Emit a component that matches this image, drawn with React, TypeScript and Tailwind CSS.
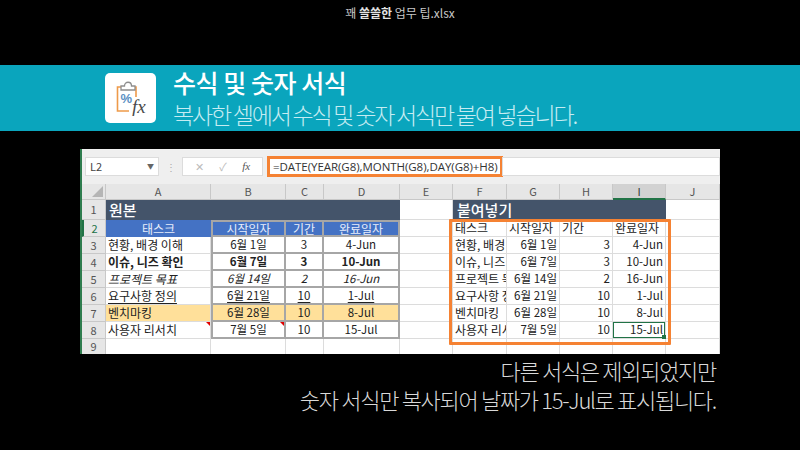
import React from "react";

const KR = "font-['Noto_Sans_CJK_KR','Noto_Sans',sans-serif]";

const colHeads = ["A", "B", "C", "D", "E", "F", "G", "H", "I", "J"];

type Row = { n: number; a: string; b: string; c: string; d: string; style: string; bg?: string };
const rows: Row[] = [
  { n: 3, a: "현황, 배경 이해", b: "6월 1일", c: "3", d: "4-Jun", style: "" },
  { n: 4, a: "이슈, 니즈 확인", b: "6월 7일", c: "3", d: "10-Jun", style: "font-bold" },
  { n: 5, a: "프로젝트 목표", b: "6월 14일", c: "2", d: "16-Jun", style: "italic" },
  { n: 6, a: "요구사항 정의", b: "6월 21일", c: "10", d: "1-Jul", style: "underline" },
  { n: 7, a: "벤치마킹", b: "6월 28일", c: "10", d: "8-Jul", style: "", bg: "bg-[#ffe09a]" },
  { n: 8, a: "사용자 리서치", b: "7월 5일", c: "10", d: "15-Jul", style: "" },
];

const grid = "border-r border-b border-[#dcdcdc]";
const head = "flex items-center justify-center bg-[#e6e6e6] border-r border-b border-[#c8c8c8] text-[11px] text-[#555]";

function App() {
  return (
    <div className={`w-[800px] h-[450px] bg-black flex flex-col overflow-hidden ${KR}`}>
      <div className="h-[65px] shrink-0 pt-[4px] text-center text-[12px] leading-[18px] text-[#c8c8c8] whitespace-nowrap">
        꽤 <span className="font-bold text-[#e4e4e4]">쓸쓸한</span> 업무 팁.xlsx
      </div>

      <div className="h-[66px] shrink-0 bg-[#0aa5bd] flex items-center pl-[105px]">
        <div className="w-[51px] h-[50px] rounded-[5px] bg-white flex items-center justify-center">
          <svg width="34" height="36" viewBox="0 0 34 36">
            <path d="M8 7H3.5v24H15" fill="none" stroke="#ee9a4a" strokeWidth="1.6" />
            <path d="M18 7h4v10" fill="none" stroke="#ee9a4a" strokeWidth="1.6" />
            <path d="M7 10V6h3.5c0-5 7-5 7 0H21v4z" fill="#fff" stroke="#8d8d8d" strokeWidth="1.3" />
            <text x="6.5" y="23" fontSize="13" fontWeight="700" fill="#5a8fc4" fontFamily="Liberation Sans">%</text>
            <text x="18" y="33" fontSize="19" fontStyle="italic" fill="#4a4a4a" fontFamily="Liberation Serif">fx</text>
          </svg>
        </div>
        <div className="ml-[17px] flex flex-col">
          <div className="text-[25px] leading-[32px] text-white font-medium tracking-[-0.45px] whitespace-nowrap">수식 및 숫자 서식</div>
          <div className="text-[23px] leading-[32px] text-[#c5ecf2] font-light tracking-[-2.2px] whitespace-nowrap">복사한 셀에서 수식 및 숫자 서식만 붙여 넣습니다.</div>
        </div>
      </div>

      <div className="ml-[80px] mt-[18px] w-[640px] h-[205px] shrink-0 bg-white flex flex-col border-l-2 border-[#2f7d4f] overflow-hidden">
        {/* Formula bar */}
        <div className="h-[35px] shrink-0 bg-[#efefef] flex items-center pl-[3px]">
          <div className="w-[74px] h-[19px] bg-white border border-[#dcdcdc] flex items-center justify-between px-[4px] text-[11px] text-[#444]">
            <span>L2</span>
            <span className="text-[7px] text-[#666]">▼</span>
          </div>
          <div className="w-[23px] text-center text-[10px] text-[#aaa]">⋮</div>
          <div className="w-[81px] h-[19px] bg-white border border-[#dcdcdc] flex items-center justify-around px-[4px] text-[11px] text-[#bbb]">
            <span>✕</span>
            <span>✓</span>
            <span className="font-['Liberation_Serif'] italic text-[#555]">fx</span>
          </div>
          <div className="ml-[4px] w-[236px] h-[21px] bg-white border-[3px] border-[#f58233] flex items-center pl-[3px] text-[11.5px] leading-none text-[#333] font-['Open_Sans','Noto_Sans',sans-serif] whitespace-nowrap tracking-[-0.05px]">
            =DATE(YEAR(G8),MONTH(G8),DAY(G8)+H8)
          </div>
          <div className="flex-1 h-[19px] bg-white border border-[#dcdcdc] ml-[-1px]" />
        </div>

        {/* Sheet */}
        <div className="relative flex-1 grid grid-cols-[24px_105px_75px_38px_76px_53px_54px_53px_53px_53px_54px] grid-rows-[16px_20px_17px_17px_17px_17px_17px_17px_17px_16px] text-[12px] text-[#222]">
          <div className="bg-[#e6e6e6] border-r border-b border-[#c8c8c8] flex items-end justify-end p-[2px]">
            <div className="w-0 h-0 border-l-[11px] border-l-transparent border-b-[11px] border-b-[#b5b5b5]" />
          </div>
          {colHeads.map((c) => (
            <div key={c} className={c === "I" ? "flex items-center justify-center bg-[#d2d2d2] border-r border-b-2 border-r-[#c8c8c8] border-b-[#217346] text-[11px] text-[#333]" : head}>{c}</div>
          ))}

          {/* Row 1 */}
          <div className={head}>1</div>
          <div className="col-span-4 bg-[#44546a] flex items-center pl-[3px] text-[15px] font-medium text-white">원본</div>
          <div className={grid} />
          <div className="col-span-4 bg-[#44546a] flex items-center pl-[4px] text-[15px] font-medium text-white">붙여넣기</div>
          <div className={grid} />

          {/* Row 2 */}
          <div className={`${head} text-[#217346] border-l-2 border-l-[#217346]`}>2</div>
          <div className="bg-[#4472c4] text-[#e8eefb] flex items-center justify-center">태스크</div>
          <div className="bg-[#4472c4] text-[#e8eefb] flex items-center justify-center border-2 border-[#a6a6a6]">시작일자</div>
          <div className="bg-[#4472c4] text-[#e8eefb] flex items-center justify-center border-2 border-l-0 border-[#a6a6a6]">기간</div>
          <div className="bg-[#4472c4] text-[#e8eefb] flex items-center justify-center border-2 border-l-0 border-[#a6a6a6]">완료일자</div>
          <div className={grid} />
          <div className={`${grid} flex items-center pl-[2px]`}>태스크</div>
          <div className={`${grid} flex items-center pl-[2px] whitespace-nowrap`}>시작일자</div>
          <div className={`${grid} flex items-center pl-[2px]`}>기간</div>
          <div className={`${grid} flex items-center pl-[2px] whitespace-nowrap`}>완료일자</div>
          <div className={grid} />

          {rows.map((r) => (
            <React.Fragment key={r.n}>
              <div className={head}>{r.n}</div>
              <div className={`relative ${r.bg ?? ""} ${r.style} ${grid} flex items-center pl-[2px] whitespace-nowrap underline-offset-2`}>
                {r.a}
                {r.n === 8 && <div className="absolute top-0 right-0 w-0 h-0 border-l-[4px] border-l-transparent border-t-[4px] border-t-[#e00000]" />}
              </div>
              <div className={`relative ${r.bg ?? ""} ${r.style} text-[11.5px] flex items-center justify-center border-x-2 border-b-2 border-[#a6a6a6] underline-offset-2 whitespace-nowrap`}>
                {r.b}
                {r.n === 8 && <div className="absolute top-0 right-0 w-0 h-0 border-l-[4px] border-l-transparent border-t-[4px] border-t-[#e00000]" />}
              </div>
              <div className={`${r.bg ?? ""} ${r.style} text-[11.5px] flex items-center justify-center border-r-2 border-b-2 border-[#a6a6a6] underline-offset-2`}>{r.c}</div>
              <div className={`${r.bg ?? ""} ${r.style} text-[11.5px] flex items-center justify-center border-r-2 border-b-2 border-[#a6a6a6] underline-offset-2`}>{r.d}</div>
              <div className={grid} />
              <div className={`${grid} flex items-center pl-[2px] overflow-hidden whitespace-nowrap`}>{r.a}</div>
              <div className={`${grid} text-[11.5px] flex items-center justify-end pr-[2px] whitespace-nowrap`}>{r.b}</div>
              <div className={`${grid} text-[11.5px] flex items-center justify-end pr-[2px]`}>{r.c}</div>
              <div className={`${grid} relative text-[11.5px] flex items-center justify-end pr-[2px]`}>
                {r.d}
                {r.n === 8 && <div className="absolute inset-0 border-[1.5px] border-[#217346]" />}
                {r.n === 8 && <div className="absolute right-[-1px] bottom-[-1px] w-[4px] h-[4px] bg-[#217346]" />}
              </div>
              <div className={grid} />
            </React.Fragment>
          ))}

          {/* Row 9 */}
          <div className={head}>9</div>
          {colHeads.map((c) => (
            <div key={c} className={grid} />
          ))}

          {/* Paste highlight */}
          <div className="absolute left-[367px] top-[35px] w-[222px] h-[126px] border-[3px] border-[#f58233] rounded-[1px] pointer-events-none" />
        </div>
      </div>

      <div className="mt-[2px] pr-[84px] text-right text-[22px] leading-[29px] font-light text-[#d9d9d9] tracking-[-1.3px] whitespace-nowrap">
        <div>다른 서식은 제외되었지만</div>
        <div>숫자 서식만 복사되어 날짜가 15-Jul로 표시됩니다.</div>
      </div>
    </div>
  );
}

export default App;
